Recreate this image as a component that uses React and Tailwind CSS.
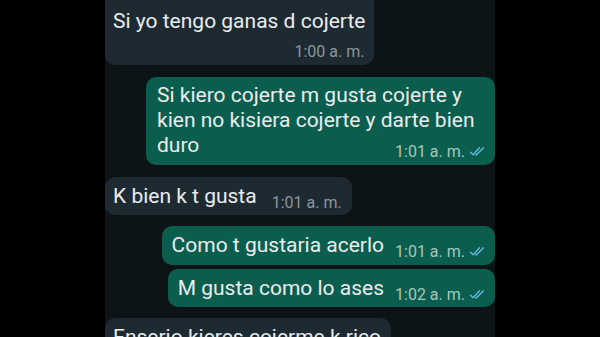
import React from "react";

function Ticks() {
  return (
    <svg width="17" height="11" viewBox="0 0 17 11" fill="none" className="ml-[4px] mb-[1px] shrink-0">
      <path d="M1.5 6.2 L4.2 8.8 L10.5 1.8" stroke="#5cb8e0" strokeWidth="1.4" strokeLinecap="round" strokeLinejoin="round" />
      <path d="M6.8 8.6 L7.2 8.9 L14.5 1.8" stroke="#5cb8e0" strokeWidth="1.4" strokeLinecap="round" strokeLinejoin="round" />
    </svg>
  );
}

function Time({ t, out }) {
  return (
    <span className={`flex items-end text-[16px] leading-[12px] whitespace-nowrap ${out ? "text-[#a6c7bd]" : "text-[#8c969b]"}`}>
      {t}
      {out && <Ticks />}
    </span>
  );
}

export default function App() {
  return (
    <div
      className="w-[600px] h-[337px] bg-black flex justify-center overflow-hidden"
      style={{ fontFamily: "Roboto, 'Noto Sans', sans-serif" }}
    >
      <div className="w-[390px] h-full bg-[#0c1418] flex flex-col text-[21px] leading-[25px] text-[#e9edef]">
        {/* bubble 1 */}
        <div className="self-start -mt-[10px] bg-[#1e2a31] rounded-[10px] pl-[8px] pr-[9px] pt-[19px] pb-[7px]">
          <div>Si yo tengo ganas d cojerte</div>
          <div className="flex justify-end mt-[12px] pr-[1px]">
            <Time t="1:00 a. m." />
          </div>
        </div>

        {/* bubble 2 */}
        <div className="self-end mt-[12px] w-[349px] bg-[#0b5e4d] rounded-[10px] pl-[11px] pr-[9px] pt-[6px] pb-[7px]">
          <div>Si kiero cojerte m gusta cojerte y</div>
          <div>kien no kisiera cojerte y darte bien</div>
          <div className="flex items-end justify-between">
            <span>duro</span>
            <Time t="1:01 a. m." out />
          </div>
        </div>

        {/* bubble 3 */}
        <div className="self-start mt-[12px] flex items-end bg-[#1e2a31] rounded-[10px] pl-[8px] pr-[10px] pt-[7px] pb-[6px]">
          <span>K bien k t gusta</span>
          <span className="ml-[15px]">
            <Time t="1:01 a. m." />
          </span>
        </div>

        {/* bubble 4 */}
        <div className="self-end mt-[11px] flex items-end bg-[#0b5e4d] rounded-[10px] pl-[10px] pr-[9px] pt-[7px] pb-[7px]">
          <span>Como t gustaria acerlo</span>
          <span className="ml-[11px]">
            <Time t="1:01 a. m." out />
          </span>
        </div>

        {/* bubble 5 */}
        <div className="self-end mt-[4px] flex items-end bg-[#0b5e4d] rounded-[10px] pl-[10px] pr-[9px] pt-[7px] pb-[6px]">
          <span>M gusta como lo ases</span>
          <span className="ml-[11px]">
            <Time t="1:02 a. m." out />
          </span>
        </div>

        {/* bubble 6 */}
        <div className="self-start mt-[11px] bg-[#1e2a31] rounded-[10px] pl-[8px] pr-[10px] pt-[7px] pb-[7px]">
          <span>Enserio kieres cojerme k rico</span>
        </div>
      </div>
    </div>
  );
}
